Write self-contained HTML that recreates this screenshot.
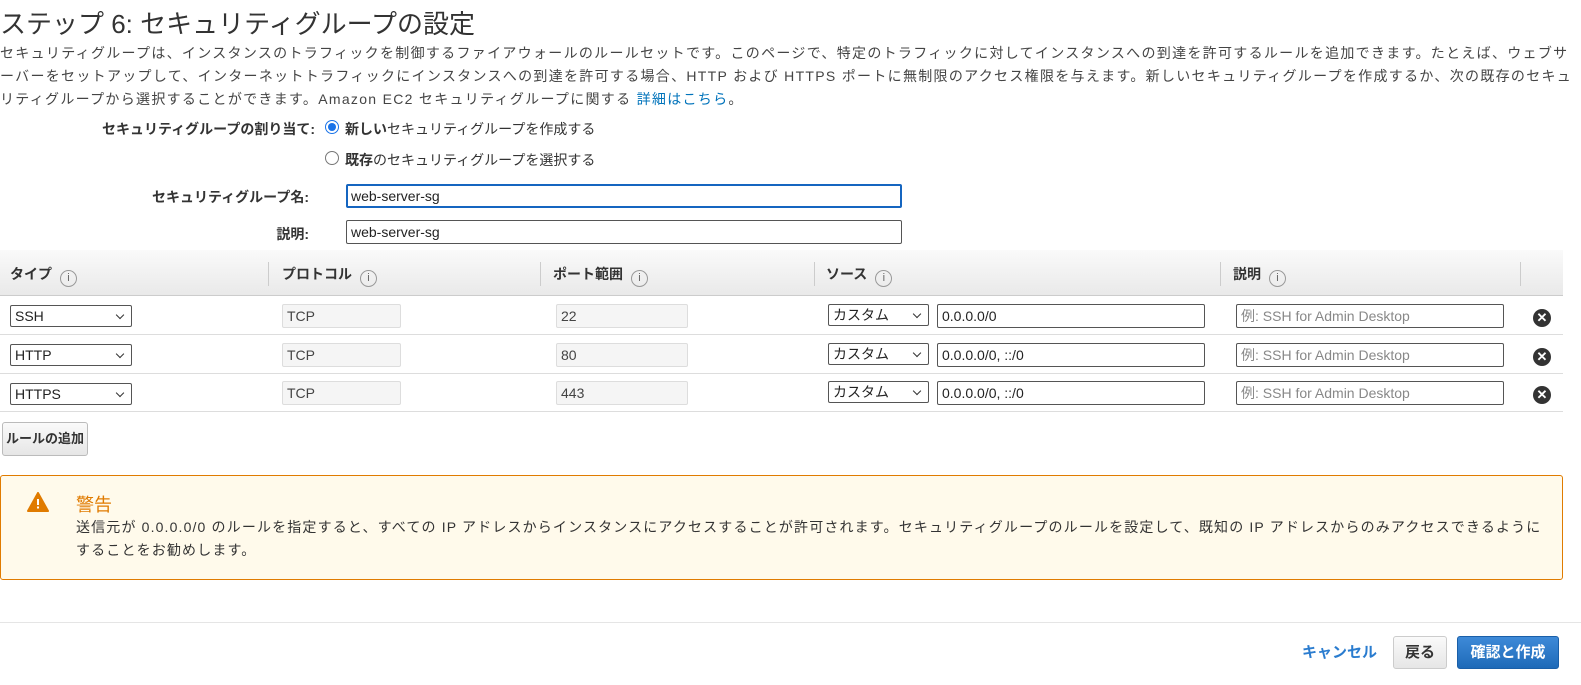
<!DOCTYPE html>
<html><head><meta charset="utf-8"><style>
*{box-sizing:border-box;margin:0;padding:0}
body{width:1581px;height:685px;background:#fff;font-family:"Liberation Sans","Noto Sans CJK JP",sans-serif;color:#333;position:relative;overflow:hidden;font-size:14px}
.a{position:absolute;white-space:nowrap}
.inp{position:absolute;border:1px solid #aaa;height:24px;background:#fff;font-size:14px;padding:3px 4px;line-height:16px;color:#222;border-radius:2px}
.ro{background:#f5f5f5;border-color:#ddd;color:#444}
.sel{position:absolute;border:1px solid #555;height:22px;background:#fff;font-size:14px;padding:2px 4px;line-height:16px;color:#222;border-radius:2px}
.sel:after{content:"";position:absolute;right:8px;top:6px;width:5px;height:5px;border-right:1.5px solid #333;border-bottom:1.5px solid #333;transform:rotate(45deg)}
.b{font-weight:bold}
.th{position:absolute;top:264px;font-weight:bold;font-size:14px;color:#333}
.info{display:inline-block;width:17px;height:17px;border:1px solid #999;border-radius:50%;font-size:11px;text-align:center;line-height:15px;color:#666;font-weight:normal;margin-left:8px;vertical-align:-2px}
.vs{position:absolute;top:262px;width:1px;height:24px;background:#ccc}
.hl{position:absolute;left:0;width:1563px;height:1px;background:#ddd}
.x{position:absolute;width:18px;height:18px;border-radius:50%;background:#333;color:#fff;font-size:13px;font-weight:bold;text-align:center;line-height:18px}
.ph{color:#888}
</style></head><body>
<div class="a" style="left:0;top:4px;font-size:26px;color:#333">ステップ 6: セキュリティグループの設定</div>
<div class="a" style="left:0;top:42px;font-size:14px;line-height:23px;color:#444;letter-spacing:1.3px">セキュリティグループは、インスタンスのトラフィックを制御するファイアウォールのルールセットです。このページで、特定のトラフィックに対してインスタンスへの到達を許可するルールを追加できます。たとえば、ウェブサ<br>ーバーをセットアップして、インターネットトラフィックにインスタンスへの到達を許可する場合、HTTP および HTTPS ポートに無制限のアクセス権限を与えます。新しいセキュリティグループを作成するか、次の既存のセキュ<br>リティグループから選択することができます。Amazon EC2 セキュリティグループに関する <span style="color:#0073bb">詳細はこちら</span>。</div>
<div class="a b" style="right:1266px;top:119px">セキュリティグループの割り当て:</div>
<div class="a" style="left:325px;top:120px;width:14px;height:14px;border-radius:50%;border:1px solid #1a73e8;background:#fff"><div style="position:absolute;left:2px;top:2px;width:8px;height:8px;border-radius:50%;background:#1a73e8"></div></div>
<div class="a" style="left:345px;top:119px"><b>新しい</b>セキュリティグループを作成する</div>
<div class="a" style="left:325px;top:151px;width:14px;height:14px;border-radius:50%;border:1px solid #777"></div>
<div class="a" style="left:345px;top:150px"><b>既存</b>のセキュリティグループを選択する</div>
<div class="a b" style="right:1272px;top:187px">セキュリティグループ名:</div>
<div class="inp" style="left:346px;top:184px;width:556px;border:2px solid #1565c0;padding:2px 3px">web-server-sg</div>
<div class="a b" style="right:1272px;top:224px">説明:</div>
<div class="inp" style="left:346px;top:220px;width:556px;border-color:#555">web-server-sg</div>

<div class="a" style="left:0;top:250px;width:1563px;height:46px;background:linear-gradient(#fafafa,#e9e9e9);border-bottom:1px solid #ccc"></div>
<div class="th" style="left:10px">タイプ<span class="info">i</span></div>
<div class="vs" style="left:268px"></div>
<div class="th" style="left:282px">プロトコル<span class="info">i</span></div>
<div class="vs" style="left:540px"></div>
<div class="th" style="left:553px">ポート範囲<span class="info">i</span></div>
<div class="vs" style="left:814px"></div>
<div class="th" style="left:826px">ソース<span class="info">i</span></div>
<div class="vs" style="left:1220px"></div>
<div class="th" style="left:1233px">説明<span class="info">i</span></div>
<div class="vs" style="left:1520px"></div>

<div class="sel" style="left:10px;top:305px;width:122px">SSH</div>
<div class="inp ro" style="left:282px;top:304px;width:119px">TCP</div>
<div class="inp ro" style="left:556px;top:304px;width:132px">22</div>
<div class="sel" style="left:828px;top:304px;width:101px">カスタム</div>
<div class="inp" style="left:937px;top:304px;width:268px;border-color:#555">0.0.0.0/0</div>
<div class="inp ph" style="left:1236px;top:304px;width:268px;border-color:#555">例: SSH for Admin Desktop</div>
<div class="x" style="left:1533px;top:309px">✕</div>
<div class="hl" style="top:334px"></div>

<div class="sel" style="left:10px;top:344px;width:122px">HTTP</div>
<div class="inp ro" style="left:282px;top:343px;width:119px">TCP</div>
<div class="inp ro" style="left:556px;top:343px;width:132px">80</div>
<div class="sel" style="left:828px;top:343px;width:101px">カスタム</div>
<div class="inp" style="left:937px;top:343px;width:268px;border-color:#555">0.0.0.0/0, ::/0</div>
<div class="inp ph" style="left:1236px;top:343px;width:268px;border-color:#555">例: SSH for Admin Desktop</div>
<div class="x" style="left:1533px;top:348px">✕</div>
<div class="hl" style="top:373px"></div>

<div class="sel" style="left:10px;top:383px;width:122px">HTTPS</div>
<div class="inp ro" style="left:282px;top:381px;width:119px">TCP</div>
<div class="inp ro" style="left:556px;top:381px;width:132px">443</div>
<div class="sel" style="left:828px;top:381px;width:101px">カスタム</div>
<div class="inp" style="left:937px;top:381px;width:268px;border-color:#555">0.0.0.0/0, ::/0</div>
<div class="inp ph" style="left:1236px;top:381px;width:268px;border-color:#555">例: SSH for Admin Desktop</div>
<div class="x" style="left:1533px;top:386px">✕</div>
<div class="hl" style="top:411px"></div>

<div class="a b" style="left:2px;top:422px;width:86px;height:34px;border:1px solid #bbb;border-radius:3px;background:linear-gradient(#fafafa,#e6e6e6);text-align:center;line-height:32px;font-size:13px;padding:0">ルールの追加</div>

<div class="a" style="left:0;top:475px;width:1563px;height:105px;background:#fffaeb;border:1px solid #e07b00;border-radius:3px"></div>
<svg class="a" style="left:27px;top:492px" width="22" height="20" viewBox="0 0 22 20"><path d="M11 1L21 19H1Z" fill="#e07b00" stroke="#e07b00" stroke-linejoin="round" stroke-width="2"/><rect x="10" y="7" width="2" height="6" fill="#fff"/><rect x="10" y="14.5" width="2" height="2" fill="#fff"/></svg>
<div class="a" style="left:76px;top:491px;font-size:18px;color:#e07b00">警告</div>
<div class="a" style="left:76px;top:516px;line-height:23px;color:#333;letter-spacing:1.15px">送信元が 0.0.0.0/0 のルールを指定すると、すべての IP アドレスからインスタンスにアクセスすることが許可されます。セキュリティグループのルールを設定して、既知の IP アドレスからのみアクセスできるように<br>することをお勧めします。</div>

<div class="hl" style="top:622px;background:#e5e5e5;width:1581px"></div>
<div class="a b" style="left:1302px;top:641px;color:#2a7ccf;font-size:15px">キャンセル</div>
<div class="a b" style="left:1393px;top:636px;width:54px;height:33px;border:1px solid #ccc;border-radius:3px;background:linear-gradient(#fafafa,#e6e6e6);text-align:center;line-height:31px;font-size:15px">戻る</div>
<div class="a b" style="left:1457px;top:636px;width:102px;height:33px;border:1px solid #1a5fa8;border-radius:3px;background:linear-gradient(#3e8ad8,#1e6ab8);color:#fff;text-align:center;line-height:31px;font-size:15px">確認と作成</div>
</body></html>
